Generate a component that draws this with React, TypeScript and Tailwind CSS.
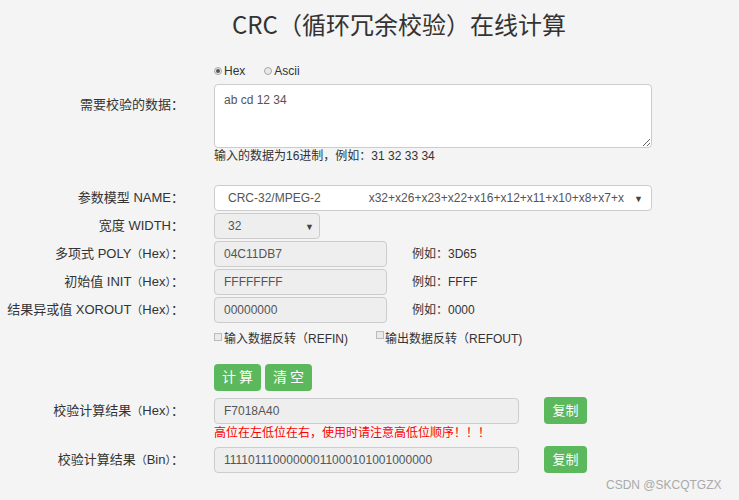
import React from "react";

const F = { fontFamily: '"Liberation Sans", "Noto Sans CJK SC", sans-serif' };

function Label({ children }: { children: React.ReactNode }) {
  return (
    <div className="w-[184px] shrink-0 text-right text-[13px] text-[#333] whitespace-nowrap">{children}</div>
  );
}

function LabelText({ head, inner }: { head: string; inner: string }) {
  return (
    <>
      {head}
      <span className="text-[11px]">（</span>
      {inner}
      <span className="text-[11px]">）</span>：
    </>
  );
}

function Row({ label, children, className = "" }: { label?: React.ReactNode; children: React.ReactNode; className?: string }) {
  return (
    <div className={"flex items-center " + className}>
      <Label>{label}</Label>
      <div className="ml-[30px] flex items-center">{children}</div>
    </div>
  );
}

function GrayInput({ value, w }: { value: string; w: string }) {
  return (
    <div className={"h-[26px] rounded-[4px] border border-[#ccc] bg-[#eeeeee] pl-[9px] flex items-center text-[12px] text-[#555] " + w}>
      {value}
    </div>
  );
}

function Arrow() {
  return <span className="text-[9px] text-[#444] leading-none">▼</span>;
}

function Radio({ checked }: { checked?: boolean }) {
  return (
    <span className="inline-flex items-center justify-center w-[8px] h-[8px] rounded-full border border-[#a8a8a8] bg-[#e8e8e8]">
      {checked && <span className="w-[4px] h-[4px] rounded-full bg-[#555]" />}
    </span>
  );
}

function Check() {
  return <span className="inline-block w-[8px] h-[8px] border border-[#bbb] bg-[#eaeaea] mb-[4px]" />;
}

function GreenBtn({ children, w, text = "text-[13px]" }: { children: React.ReactNode; w: string; text?: string }) {
  return (
    <div className={"h-[27px] rounded-[4px] bg-[#5cb85c] text-white flex items-center justify-center " + w + " " + text}>
      {children}
    </div>
  );
}

export default function App() {
  return (
    <div className="relative w-[739px] h-[500px] bg-[#f4f4f4] overflow-hidden" style={F}>
      <div
        className="h-[48px] flex items-center justify-center pl-[59px] text-[24px] text-[#333]"
        style={{ fontFamily: '"Noto Sans CJK SC", "Open Sans", sans-serif' }}
      >
        CRC（循环冗余校验）在线计算
      </div>

      <Row label="需要校验的数据：" className="mt-[14px]">
        <div className="flex flex-col">
          <div className="h-[18px] flex items-center text-[12px] text-[#333]">
            <Radio checked />
            <span className="ml-[2px]">Hex</span>
            <span className="ml-[19px]"><Radio /></span>
            <span className="ml-[2px]">Ascii</span>
          </div>
          <textarea
            className="mt-[4px] w-[438px] h-[64px] rounded-[4px] border border-[#ccc] bg-white px-[9px] py-[6px] text-[12px] text-[#555] outline-none"
            defaultValue="ab cd 12 34"
            style={F}
          />
        </div>
      </Row>
      <Row className="mt-[1px] h-[14px]">
        <div className="text-[12px] text-[#333] leading-[14px] whitespace-nowrap">输入的数据为16进制，例如：31 32 33 34</div>
      </Row>

      <Row label="参数模型 NAME：" className="mt-[22px]">
        <div className="w-[438px] h-[26px] rounded-[4px] border border-[#ccc] bg-white flex items-center text-[12px] text-[#555] pl-[13px] pr-[8px] whitespace-nowrap">
          <span>CRC-32/MPEG-2</span>
          <span className="ml-[48px]">x32+x26+x23+x22+x16+x12+x11+x10+x8+x7+x</span>
          <span className="ml-auto"><Arrow /></span>
        </div>
      </Row>
      <Row label="宽度 WIDTH：" className="mt-[2px]">
        <div className="w-[106px] h-[26px] rounded-[4px] border border-[#ccc] bg-[#eeeeee] flex items-center text-[12px] text-[#555] pl-[13px] pr-[5px]">
          <span>32</span>
          <span className="ml-auto"><Arrow /></span>
        </div>
      </Row>
      <Row label={<LabelText head="多项式 POLY" inner="Hex" />} className="mt-[2px]">
        <GrayInput value="04C11DB7" w="w-[173px]" />
        <span className="ml-[25px] text-[12px] text-[#333]">例如：3D65</span>
      </Row>
      <Row label={<LabelText head="初始值 INIT" inner="Hex" />} className="mt-[2px]">
        <GrayInput value="FFFFFFFF" w="w-[173px]" />
        <span className="ml-[25px] text-[12px] text-[#333]">例如：FFFF</span>
      </Row>
      <Row label={<LabelText head="结果异或值 XOROUT" inner="Hex" />} className="mt-[2px]">
        <GrayInput value="00000000" w="w-[173px]" />
        <span className="ml-[25px] text-[12px] text-[#333]">例如：0000</span>
      </Row>

      <Row className="mt-[7px] h-[18px]">
        <div className="flex items-center text-[12px] text-[#333] whitespace-nowrap">
          <Check />
          <span className="ml-[2px]">输入数据反转（REFIN)</span>
          <span className="ml-[28px]"><Check /></span>
          <span className="ml-[1px]">输出数据反转（REFOUT)</span>
        </div>
      </Row>

      <Row className="mt-[16px]">
        <GreenBtn w="w-[47px]" text="text-[14px] tracking-[3px] pl-[3px]">计算</GreenBtn>
        <span className="ml-[4px]"><GreenBtn w="w-[47px]" text="text-[14px] tracking-[3px] pl-[3px]">清空</GreenBtn></span>
      </Row>

      <Row label={<LabelText head="校验计算结果" inner="Hex" />} className="mt-[6px]">
        <GrayInput value="F7018A40" w="w-[305px]" />
        <span className="ml-[25px]"><GreenBtn w="w-[43px]">复制</GreenBtn></span>
      </Row>
      <Row className="mt-[2px] h-[14px]">
        <div className="text-[12px] text-[#ff0000] leading-[14px] whitespace-nowrap">高位在左低位在右，使用时请注意高低位顺序！！！</div>
      </Row>
      <Row label={<LabelText head="校验计算结果" inner="Bin" />} className="mt-[6px]">
        <GrayInput value="11110111000000011000101001000000" w="w-[305px]" />
        <span className="ml-[25px]"><GreenBtn w="w-[43px]">复制</GreenBtn></span>
      </Row>

      <div className="absolute left-[606px] top-[476px] text-[12px] text-[#aaa] whitespace-nowrap">CSDN @SKCQTGZX</div>
    </div>
  );
}
